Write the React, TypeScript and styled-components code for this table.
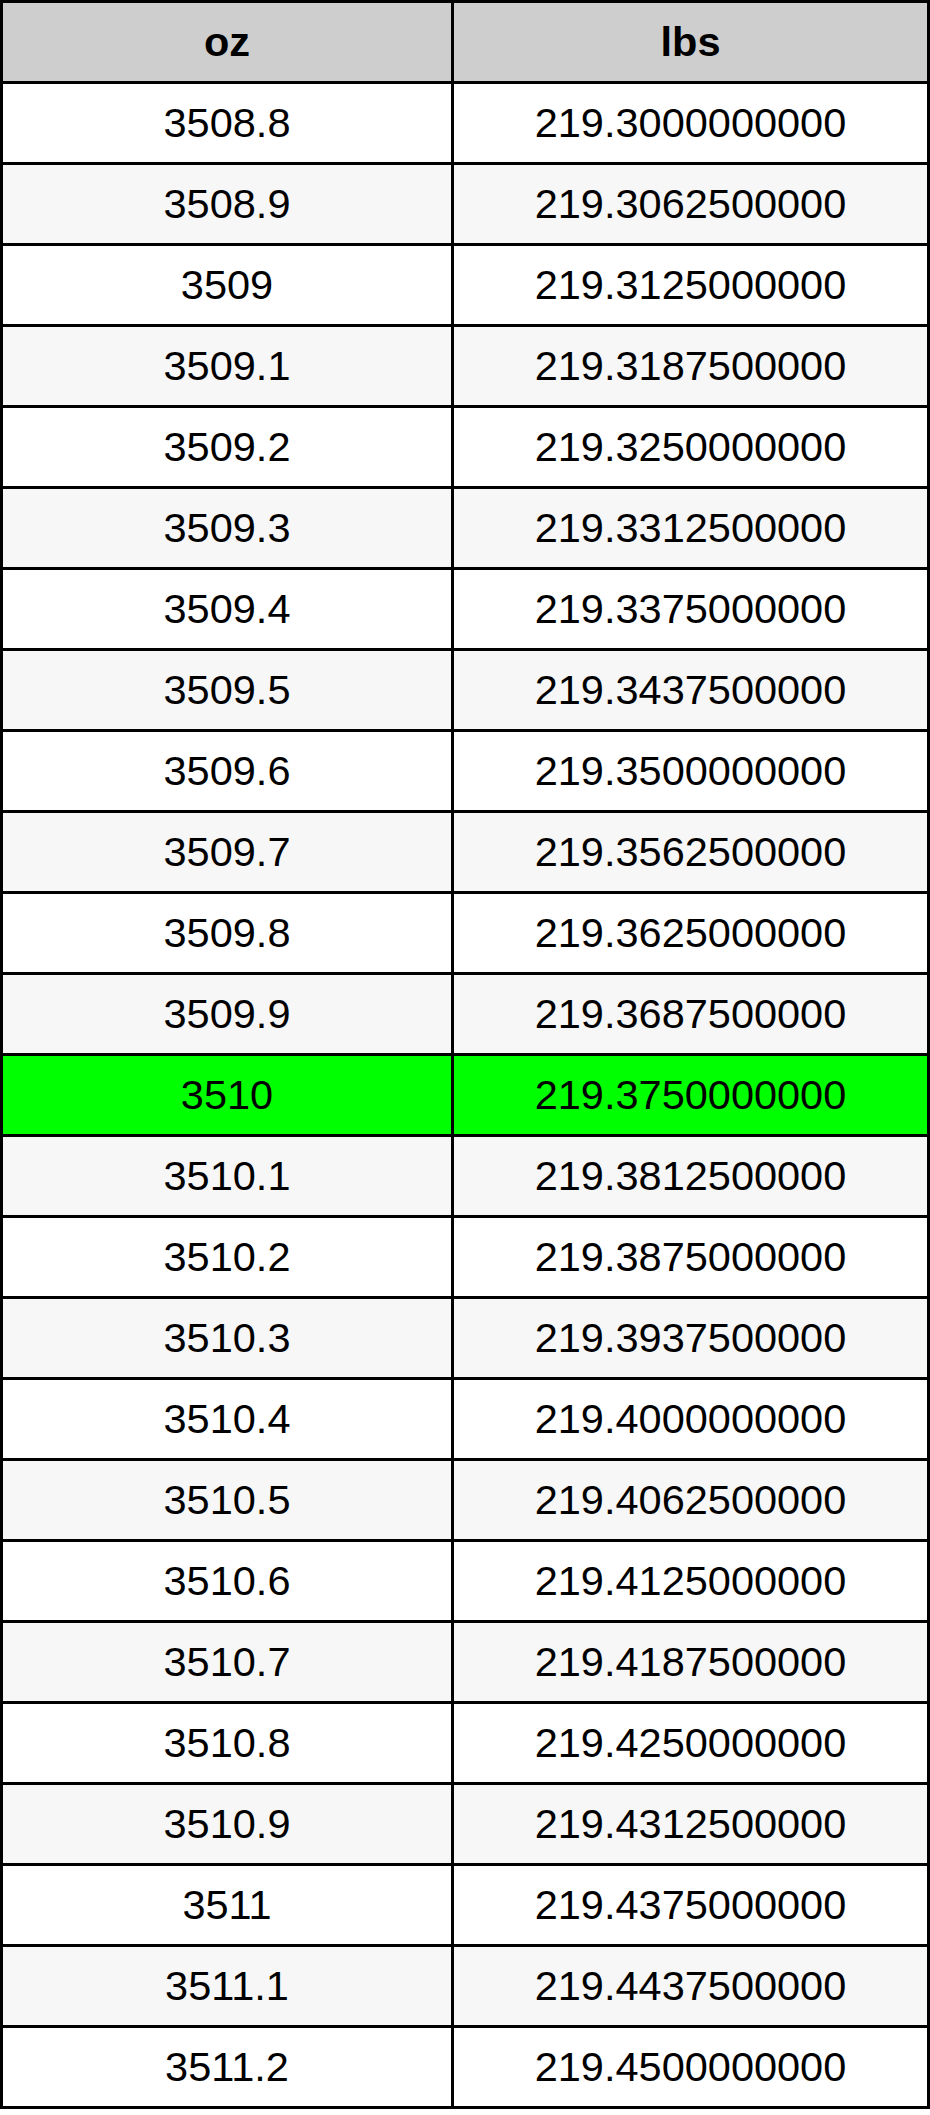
import React from 'react';
import styled, { createGlobalStyle } from 'styled-components';

const GlobalStyle = createGlobalStyle`
    html, body {
        margin: 0;
        padding: 0;
        background: #ffffff;
    }
    body {
        font-family: "Liberation Sans", Arial, sans-serif;
    }
`;

const rows: [string, string][] = [
    ['3508.8', '219.3000000000'],
    ['3508.9', '219.3062500000'],
    ['3509', '219.3125000000'],
    ['3509.1', '219.3187500000'],
    ['3509.2', '219.3250000000'],
    ['3509.3', '219.3312500000'],
    ['3509.4', '219.3375000000'],
    ['3509.5', '219.3437500000'],
    ['3509.6', '219.3500000000'],
    ['3509.7', '219.3562500000'],
    ['3509.8', '219.3625000000'],
    ['3509.9', '219.3687500000'],
    ['3510', '219.3750000000'],
    ['3510.1', '219.3812500000'],
    ['3510.2', '219.3875000000'],
    ['3510.3', '219.3937500000'],
    ['3510.4', '219.4000000000'],
    ['3510.5', '219.4062500000'],
    ['3510.6', '219.4125000000'],
    ['3510.7', '219.4187500000'],
    ['3510.8', '219.4250000000'],
    ['3510.9', '219.4312500000'],
    ['3511', '219.4375000000'],
    ['3511.1', '219.4437500000'],
    ['3511.2', '219.4500000000'],
];

export default function App() {
    return (
        <>
            <GlobalStyle />
            <Table>
                <colgroup>
                    <OzCol />
                    <col />
                </colgroup>
                <thead>
                    <tr>
                        <HeadCell>oz</HeadCell>
                        <HeadCell>lbs</HeadCell>
                    </tr>
                </thead>
                <tbody>
                    {rows.map(([oz, lbs], index) => (
                        <Row
                            key={oz}
                            $alt={index % 2 === 1}
                            $highlight={oz === '3510'}
                        >
                            <Cell>{oz}</Cell>
                            <Cell>{lbs}</Cell>
                        </Row>
                    ))}
                </tbody>
            </Table>
        </>
    );
}

const Table = styled.table`
    width: 930px;
    table-layout: fixed;
    border-collapse: collapse;
    border: 3px solid #000000;
    font-family: "Liberation Sans", Arial, sans-serif;
    font-size: 41.5px;
    color: #000000;
`;

const OzCol = styled.col`
    width: 451px;
`;

const HeadCell = styled.th`
    height: 78px;
    padding: 0;
    background: #cecece;
    border: 3px solid #000000;
    font-weight: bold;
    text-align: center;
    vertical-align: middle;
`;

const Row = styled.tr<{ $alt: boolean; $highlight: boolean }>`
    background: ${(p) =>
        p.$highlight ? '#00ff00' : p.$alt ? '#f7f7f7' : '#ffffff'};
`;

const Cell = styled.td`
    height: 78px;
    padding: 0;
    border: 3px solid #000000;
    text-align: center;
    vertical-align: middle;
`;
